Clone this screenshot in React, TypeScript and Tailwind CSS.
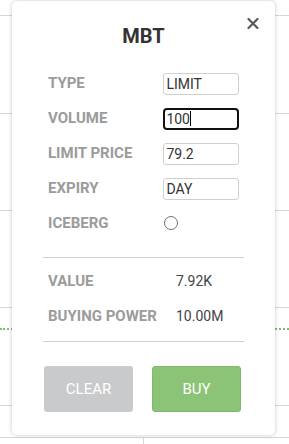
import React from "react";

function Row({ label, children }: { label: string; children?: React.ReactNode }) {
  return (
    <div className="flex h-[35px] items-center">
      <div className="w-[116px] text-[15px] font-bold text-[#9b9b9b] leading-none">{label}</div>
      {children}
    </div>
  );
}

function Field({ value, focused }: { value: string; focused?: boolean }) {
  return (
    <div
      className={
        focused
          ? "flex h-[22px] w-[76px] items-center rounded-[4px] border-2 border-[#111] pl-[1px] text-[14px] text-[#333] leading-none"
          : "flex h-[22px] w-[76px] items-center rounded-[3px] border border-[#cfcfcf] pl-[2px] text-[14px] text-[#333] leading-none"
      }
    >
      <span>{value}</span>
      {focused && <span className="h-[15px] w-[1.5px] bg-black" />}
    </div>
  );
}

function InfoRow({ label, value }: { label: string; value: string }) {
  return (
    <div className="flex h-[35px] items-center">
      <div className="w-[128px] text-[15px] font-bold text-[#9b9b9b] leading-none">{label}</div>
      <div className="-mt-[2px] text-[14px] text-[#444] leading-none">{value}</div>
    </div>
  );
}

export default function App() {
  return (
    <div
      className="relative h-[444px] w-[289px] overflow-hidden bg-white"
      style={{ fontFamily: "Roboto, 'Liberation Sans', sans-serif" }}
    >
      {/* background grid */}
      <div className="flex flex-col pt-[15px]">
        <div className="h-[98px] border-t border-[#d6d6d6]" />
        <div className="h-[97px] border-t border-[#d6d6d6]" />
        <div className="h-[97px] border-t border-[#d6d6d6]" />
        <div className="h-[98px] border-t border-[#d6d6d6] pt-[20px]">
          <div className="border-t-2 border-dotted border-[#7cc26b]" />
        </div>
        <div className="h-[32px] border-t border-[#d6d6d6]" />
        <div className="flex h-[10px] border-t border-[#d6d6d6]">
          <div className="w-[143px]" />
          <div className="border-l border-[#d6d6d6]" />
        </div>
      </div>

      {/* modal */}
      <div className="absolute left-[12px] top-[1px] flex h-[434px] w-[263px] flex-col rounded-[5px] bg-white shadow-[0_0_4px_rgba(0,0,0,0.22)]">
        <button className="absolute left-[235px] top-[17px] h-[11px] w-[12px]">
          <svg viewBox="0 0 12 11" width="12" height="11">
            <path d="M1.5 1 L10.5 10 M10.5 1 L1.5 10" stroke="#5a5a5a" strokeWidth="2.2" strokeLinecap="round" />
          </svg>
        </button>
        <div className="mt-[23px] h-[24px] text-center text-[20px] font-bold leading-[24px] text-[#333]">MBT</div>

        <div className="mt-[18px] flex flex-col px-[36px]">
          <Row label="TYPE">
            <Field value="LIMIT" />
          </Row>
          <Row label="VOLUME">
            <Field value="100" focused />
          </Row>
          <Row label="LIMIT PRICE">
            <Field value="79.2" />
          </Row>
          <Row label="EXPIRY">
            <Field value="DAY" />
          </Row>
          <Row label="ICEBERG">
            <div className="-mt-[1px] h-[14px] w-[14px] rounded-full border border-[#707070]" />
          </Row>
        </div>

        <div className="mx-[31px] mt-[16px] border-t border-[#cfcfcf]" />

        <div className="mt-[6px] flex flex-col px-[36px]">
          <InfoRow label="VALUE" value="7.92K" />
          <InfoRow label="BUYING POWER" value="10.00M" />
        </div>

        <div className="mx-[31px] mt-[7px] border-t border-[#cfcfcf]" />

        <div className="mt-[24px] flex gap-[19px] pl-[32px]">
          <button className="flex h-[46px] w-[89px] items-center justify-center rounded-[3px] bg-[#c9cacc] text-[15px] text-white">
            CLEAR
          </button>
          <button className="flex h-[46px] w-[89px] items-center justify-center rounded-[3px] border border-[#7db96b] bg-[#8bc476] text-[15px] text-white">
            BUY
          </button>
        </div>
      </div>
    </div>
  );
}
